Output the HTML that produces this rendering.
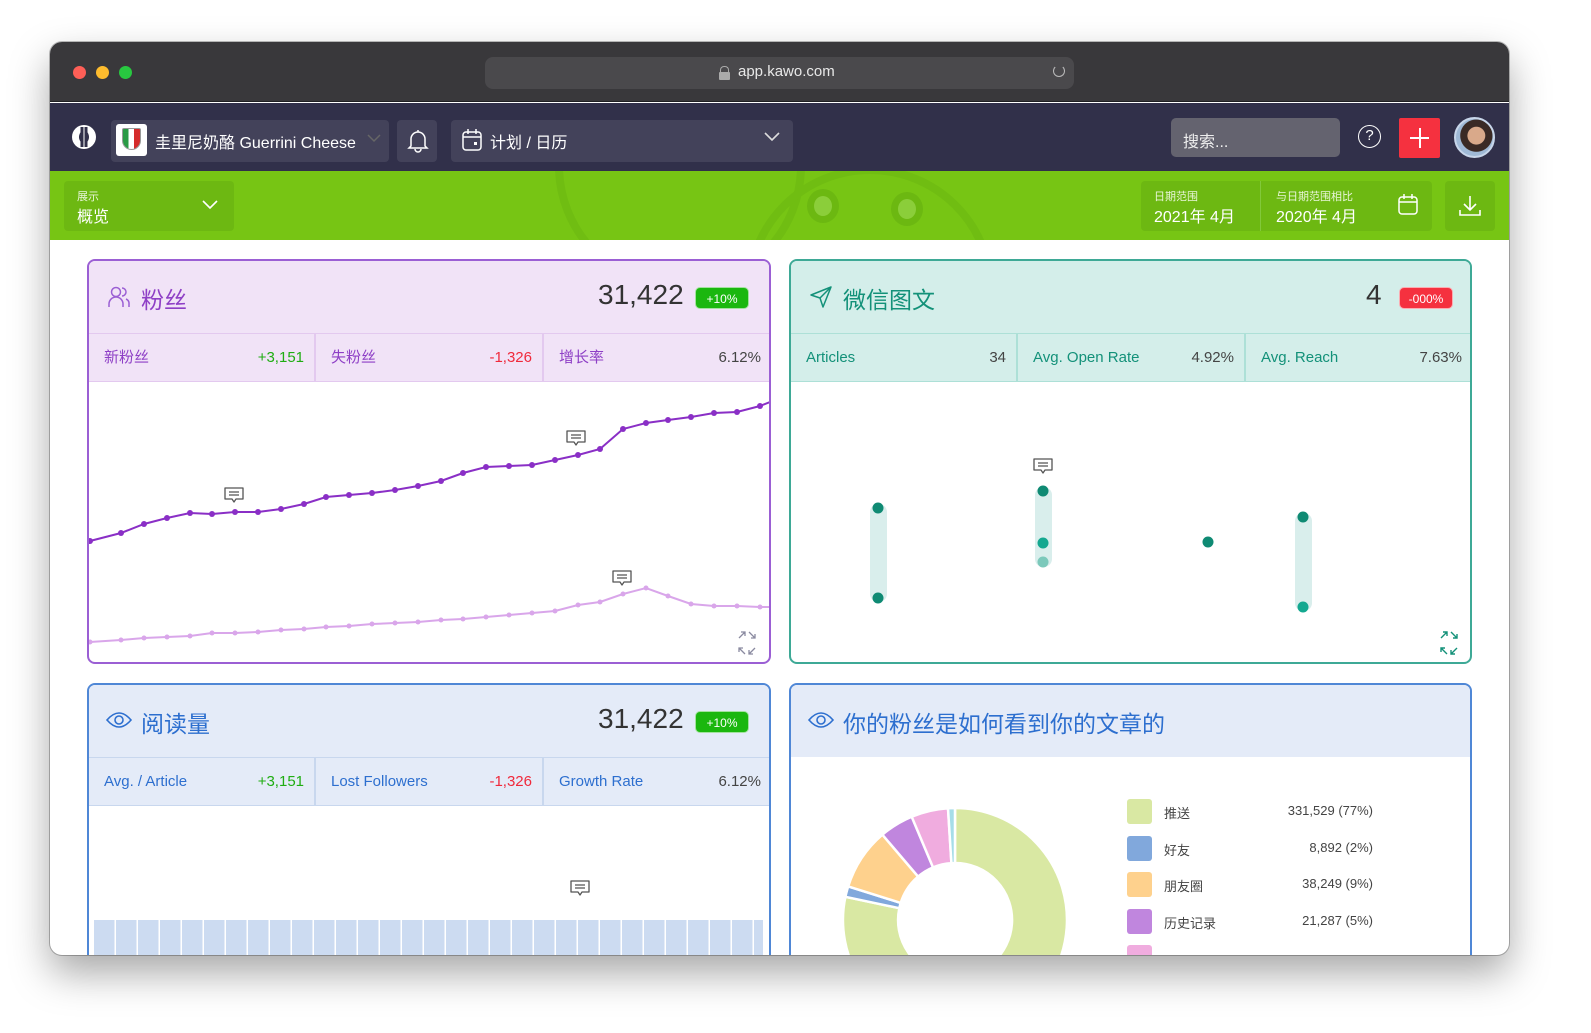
<!DOCTYPE html>
<html><head><meta charset="utf-8"><style>
*{box-sizing:border-box;margin:0;padding:0}
body{width:1591px;height:1033px;background:#fff;position:relative;overflow:hidden;font-family:"Liberation Sans","Noto Sans CJK SC",sans-serif}
.a{position:absolute}
#win{left:50px;top:42px;width:1459px;height:913px;border-radius:12px;overflow:hidden;box-shadow:0 18px 40px rgba(0,0,0,.35),0 0 0 1px rgba(0,0,0,.25);background:#fff}
.card{position:absolute;border:2px solid;border-radius:8px;overflow:hidden;background:#fff}
.hd{position:absolute;left:0;right:0;top:0;height:72px}
.st{position:absolute;left:0;right:0;top:72px;height:49px;border-top:1px solid;border-bottom:1px solid}
.cell{position:absolute;top:0;height:47px;font-size:15px;line-height:47px}
.cell .l{position:absolute;left:15px}
.cell .r{position:absolute;right:10px;color:#444}
.title{position:absolute;left:52px;top:20px;font-size:23px}
.big{position:absolute;top:18px;font-size:28px;color:#333}
.badge{position:absolute;top:26px;height:22px;border-radius:5px;color:#fff;font-size:12px;line-height:22px;text-align:center;border:1px solid rgba(255,255,255,.6)}
.bx{position:absolute;background:rgba(0,0,0,.07);border-radius:4px}
.leg{position:absolute;left:1127px;font-size:13px;color:#444;white-space:nowrap;width:260px;height:26px}
.leg i{position:absolute;left:0;top:0;width:25px;height:25px;border-radius:3px}
.leg b{position:absolute;left:37px;top:4px;font-weight:normal}
.leg span{position:absolute;left:158px;top:4px;width:88px;text-align:right}
</style></head><body>
<div id="win" class="a">
 <div class="a" style="left:0;top:0;width:1459px;height:60px;background:#39383b;border-bottom:1px solid #1f1f22"></div>
 <div class="a" style="left:23px;top:24px;width:13px;height:13px;border-radius:50%;background:#fe5f57"></div>
 <div class="a" style="left:46px;top:24px;width:13px;height:13px;border-radius:50%;background:#febc2e"></div>
 <div class="a" style="left:69px;top:24px;width:13px;height:13px;border-radius:50%;background:#28c840"></div>
 <div class="a" style="left:435px;top:15px;width:589px;height:32px;border-radius:8px;background:#4a494c"></div>
 <div class="a" style="left:670px;top:24px;width:9px;height:7px;border:1.5px solid #aaa;border-bottom:none;border-radius:4px 4px 0 0"></div>
 <div class="a" style="left:669px;top:30px;width:11px;height:8px;background:#aaa;border-radius:1px"></div>
 <div class="a" style="left:688px;top:21px;font-size:15px;color:#e8e8e8">app.kawo.com</div>
 <div class="a" style="left:1003px;top:23px;width:12px;height:12px;border:1.5px solid #bbb;border-radius:50%;border-top-color:transparent"></div>
 <div class="a" style="left:0;top:61px;width:1459px;height:68px;background:#31304a"></div>
 <svg class="a" style="left:21px;top:82px" width="26" height="26" viewBox="0 0 26 26"><circle cx="13" cy="13" r="12" fill="#fff"/><path d="M11 3v20M15 3v20" stroke="#31304a" stroke-width="3"/><path d="M11 8q-4 5 0 10M15 8q4 5 0 10" stroke="#31304a" stroke-width="2" fill="none"/></svg>
 <div class="bx" style="left:61px;top:78px;width:278px;height:42px;background:rgba(255,255,255,.09)"></div>
 <div class="a" style="left:66px;top:82px;width:31px;height:32px;background:#fff;border-radius:3px"></div>
 <div class="a" style="left:72px;top:86px;width:19px;height:22px;border-radius:2px 2px 10px 10px;background:linear-gradient(90deg,#2a9a45 33%,#fff 33%,#fff 66%,#d52b2b 66%);border:1px solid #999"></div>
 <div class="a" style="left:105px;top:87px;font-size:16px;color:#fff">圭里尼奶酪 Guerrini Cheese</div>
 <svg class="a" style="left:317px;top:92px" width="14" height="9"><path d="M1 1l6 6 6-6" stroke="#666" stroke-width="1.5" fill="none"/></svg>
 <div class="bx" style="left:347px;top:78px;width:40px;height:42px;background:rgba(255,255,255,.09)"></div>
 <svg class="a" style="left:357px;top:86px" width="22" height="26" viewBox="0 0 22 26"><path d="M4 18V11a7 7 0 0114 0v7l2 2H2z M8 21a3 3 0 006 0M11 2v2" stroke="#fff" stroke-width="1.5" fill="none"/></svg>
 <div class="bx" style="left:401px;top:78px;width:342px;height:42px;background:rgba(255,255,255,.09)"></div>
 <svg class="a" style="left:411px;top:86px" width="22" height="24"><rect x="2" y="4" width="18" height="18" rx="3" stroke="#fff" stroke-width="1.5" fill="none"/><path d="M2 9h18M7 1v5M15 1v5" stroke="#fff" stroke-width="1.5"/><rect x="13" y="14" width="3" height="3" fill="#fff"/></svg>
 <div class="a" style="left:440px;top:87px;font-size:16px;color:#fff">计划 / 日历</div>
 <svg class="a" style="left:714px;top:90px" width="16" height="10"><path d="M1 1l7 7 7-7" stroke="#ddd" stroke-width="1.6" fill="none"/></svg>
 <div class="a" style="left:1121px;top:76px;width:169px;height:39px;border-radius:5px;background:#64636f"></div>
 <div class="a" style="left:1133px;top:86px;font-size:16px;color:#eee">搜索...</div>
 <div class="a" style="left:1308px;top:83px;width:23px;height:23px;border:1.5px solid #fff;border-radius:50%;color:#fff;font-size:15px;text-align:center;line-height:20px">?</div>
 <div class="a" style="left:1349px;top:76px;width:41px;height:40px;background:#f5313f;border-radius:2px"></div>
 <div class="a" style="left:1360px;top:95px;width:19px;height:2px;background:#fff"></div>
 <div class="a" style="left:1369px;top:86px;width:2px;height:20px;background:#fff"></div>
 <div class="a" style="left:1404px;top:75px;width:41px;height:41px;border-radius:50%;background:radial-gradient(circle at 55% 45%,#d9a98a 0 30%,#3a2a25 32% 55%,#9fb9d6 57%);border:2px solid #c8d6ea"></div>
 <div class="a" style="left:0;top:129px;width:1459px;height:69px;background:#77c514;overflow:hidden">
  <div class="a" style="left:505px;top:-130px;width:250px;height:250px;border-radius:50%;border:8px solid #70bd12"></div>
  <div class="a" style="left:695px;top:-5px;width:250px;height:250px;border-radius:50%;border:8px solid #70bd12"></div>
  <div class="a" style="left:757px;top:18px;width:32px;height:34px;border-radius:50%;border:7px solid #6cb811;background:#8bce3a"></div>
  <div class="a" style="left:841px;top:21px;width:32px;height:34px;border-radius:50%;border:7px solid #6cb811;background:#8bce3a"></div>
 </div>
 <div class="bx" style="left:14px;top:139px;width:170px;height:50px;background:#6db812"></div>
 <div class="a" style="left:27px;top:146px;font-size:11px;color:#e8f5d8">展示</div>
 <div class="a" style="left:27px;top:161px;font-size:16px;color:#fff">概览</div>
 <svg class="a" style="left:152px;top:158px" width="16" height="10"><path d="M1 1l7 7 7-7" stroke="#fff" stroke-width="1.6" fill="none"/></svg>
 <div class="bx" style="left:1091px;top:139px;width:291px;height:50px;background:#6db812"></div>
 <div class="a" style="left:1210px;top:139px;width:1px;height:50px;background:#82c93a"></div>
 <div class="a" style="left:1104px;top:146px;font-size:11px;color:#e8f5d8">日期范围</div>
 <div class="a" style="left:1104px;top:161px;font-size:16px;color:#fff">2021年 4月</div>
 <div class="a" style="left:1226px;top:146px;font-size:11px;color:#e8f5d8">与日期范围相比</div>
 <div class="a" style="left:1226px;top:161px;font-size:16px;color:#fff">2020年 4月</div>
 <svg class="a" style="left:1347px;top:151px" width="22" height="24"><rect x="2" y="4" width="18" height="17" rx="3" stroke="#fff" stroke-width="1.5" fill="none"/><path d="M2 9h18M7 1v5M15 1v5" stroke="#fff" stroke-width="1.5"/></svg>
 <div class="bx" style="left:1395px;top:139px;width:50px;height:50px;background:#6db812"></div>
 <svg class="a" style="left:1408px;top:152px" width="24" height="24"><path d="M12 2v14M6 10l6 6 6-6M2 16v5h20v-5" stroke="#fff" stroke-width="1.6" fill="none"/></svg>
</div>

<div class="card" style="left:87px;top:259px;width:684px;height:405px;border-color:#9b5fd4">
 <div class="hd" style="background:#f1e3f7"></div>
 <svg class="a" style="left:18px;top:24px" width="24" height="24"><circle cx="9" cy="7" r="4.5" stroke="#9b5fd4" stroke-width="1.5" fill="none"/><path d="M2 22v-3a7 7 0 0114 0v3M15 3a4 4 0 010 8M19 14a5 5 0 013 5v3" stroke="#9b5fd4" stroke-width="1.5" fill="none"/></svg>
 <div class="title" style="color:#8e3fc6">粉丝</div>
 <div class="big" style="left:509px">31,422</div>
 <div class="badge" style="left:606px;width:54px;background:#1bb70f">+10%</div>
 <div class="st" style="background:#f1e3f7;border-color:#e3c9ef">
  <div class="cell" style="left:0;width:227px;border-right:2px solid #e3c9ef"><span class="l" style="color:#8e3fc6">新粉丝</span><span class="r" style="color:#1fad12">+3,151</span></div>
  <div class="cell" style="left:227px;width:228px;border-right:2px solid #e3c9ef"><span class="l" style="color:#8e3fc6">失粉丝</span><span class="r" style="color:#f0293b">-1,326</span></div>
  <div class="cell" style="left:455px;width:227px"><span class="l" style="color:#8e3fc6">增长率</span><span class="r">6.12%</span></div>
 </div>
</div>
<div class="card" style="left:789px;top:259px;width:683px;height:405px;border-color:#3ea996">
 <div class="hd" style="background:#d4eeea"></div>
 <svg class="a" style="left:18px;top:24px" width="24" height="24"><path d="M22 2L2 10l9 3 3 9z M22 2L11 13" stroke="#139179" stroke-width="1.5" fill="none" stroke-linejoin="round"/></svg>
 <div class="title" style="color:#139179">微信图文</div>
 <div class="big" style="left:575px">4</div>
 <div class="badge" style="left:608px;width:54px;background:#f5313f">-000%</div>
 <div class="st" style="background:#d4eeea;border-color:#ade0d7">
  <div class="cell" style="left:0;width:227px;border-right:2px solid #ade0d7"><span class="l" style="color:#139179">Articles</span><span class="r">34</span></div>
  <div class="cell" style="left:227px;width:228px;border-right:2px solid #ade0d7"><span class="l" style="color:#139179">Avg. Open Rate</span><span class="r">4.92%</span></div>
  <div class="cell" style="left:455px;width:226px"><span class="l" style="color:#139179">Avg. Reach</span><span class="r">7.63%</span></div>
 </div>
</div>
<div class="card" style="left:87px;top:683px;width:684px;height:272px;border-color:#4f87d6;border-bottom:none;border-radius:8px 8px 0 0">
 <div class="hd" style="background:#e4ebf8"></div>
 <svg class="a" style="left:17px;top:24px" width="26" height="22"><path d="M1 11Q13-3 25 11Q13 25 1 11z" stroke="#2d6fcf" stroke-width="1.6" fill="none"/><circle cx="13" cy="11" r="4" stroke="#2d6fcf" stroke-width="1.6" fill="none"/></svg>
 <div class="title" style="color:#2d6fcf">阅读量</div>
 <div class="big" style="left:509px">31,422</div>
 <div class="badge" style="left:606px;width:54px;background:#1bb70f">+10%</div>
 <div class="st" style="background:#e4ebf8;border-color:#c8d7ee">
  <div class="cell" style="left:0;width:227px;border-right:2px solid #c8d7ee"><span class="l" style="color:#2d6fcf">Avg. / Article</span><span class="r" style="color:#1fad12">+3,151</span></div>
  <div class="cell" style="left:227px;width:228px;border-right:2px solid #c8d7ee"><span class="l" style="color:#2d6fcf">Lost Followers</span><span class="r" style="color:#f0293b">-1,326</span></div>
  <div class="cell" style="left:455px;width:227px"><span class="l" style="color:#2d6fcf">Growth Rate</span><span class="r">6.12%</span></div>
 </div>
</div>
<div class="card" style="left:789px;top:683px;width:683px;height:272px;border-color:#4f87d6;border-bottom:none;border-radius:8px 8px 0 0">
 <div class="hd" style="background:#e4ebf8"></div>
 <svg class="a" style="left:17px;top:24px" width="26" height="22"><path d="M1 11Q13-3 25 11Q13 25 1 11z" stroke="#2d6fcf" stroke-width="1.6" fill="none"/><circle cx="13" cy="11" r="4" stroke="#2d6fcf" stroke-width="1.6" fill="none"/></svg>
 <div class="title" style="color:#2d6fcf">你的粉丝是如何看到你的文章的</div>
</div>

<svg class="a" style="left:0;top:0" width="1591" height="1033">
 <defs><g id="cm"><path d="M-9-7h18v11h-7l-2 3-2-3h-7z" fill="#fff" stroke="#555" stroke-width="1.3" stroke-linejoin="round"/><path d="M-5-3h10M-5 0h10" stroke="#555" stroke-width="1.2"/></g>
 <clipPath id="c1"><rect x="89" y="381" width="680" height="280"/></clipPath>
 <clipPath id="cw"><rect x="50" y="42" width="1459" height="913"/></clipPath></defs>
 <g clip-path="url(#c1)">
 <polyline fill="none" stroke="#8a2fc6" stroke-width="2" points="88,542 90,541 121,533 144,524 167,518 190,513 212,514 235,512 258,512 281,509 304,504 326,497 349,495 372,493 395,490 418,486 441,481 463,473 486,467 509,466 532,465 555,460 578,455 600,449 623,429 646,423 668,420 691,417 714,413 737,412 760,406 770,402"/>
 <g fill="#8a2fc6"><circle cx="90" cy="541" r="3"/><circle cx="121" cy="533" r="3"/><circle cx="144" cy="524" r="3"/><circle cx="167" cy="518" r="3"/><circle cx="190" cy="513" r="3"/><circle cx="212" cy="514" r="3"/><circle cx="235" cy="512" r="3"/><circle cx="258" cy="512" r="3"/><circle cx="281" cy="509" r="3"/><circle cx="304" cy="504" r="3"/><circle cx="326" cy="497" r="3"/><circle cx="349" cy="495" r="3"/><circle cx="372" cy="493" r="3"/><circle cx="395" cy="490" r="3"/><circle cx="418" cy="486" r="3"/><circle cx="441" cy="481" r="3"/><circle cx="463" cy="473" r="3"/><circle cx="486" cy="467" r="3"/><circle cx="509" cy="466" r="3"/><circle cx="532" cy="465" r="3"/><circle cx="555" cy="460" r="3"/><circle cx="578" cy="455" r="3"/><circle cx="600" cy="449" r="3"/><circle cx="623" cy="429" r="3"/><circle cx="646" cy="423" r="3"/><circle cx="668" cy="420" r="3"/><circle cx="691" cy="417" r="3"/><circle cx="714" cy="413" r="3"/><circle cx="737" cy="412" r="3"/><circle cx="760" cy="406" r="3"/></g>
 <polyline fill="none" stroke="#d9a6ea" stroke-width="2" points="88,642 90,642 121,640 144,638 167,637 190,636 212,633 235,633 258,632 281,630 304,629 326,627 349,626 372,624 395,623 418,622 441,620 463,619 486,617 509,615 532,613 555,611 578,605 600,602 623,594 646,588 668,596 691,604 714,606 737,606 760,607 770,607"/>
 <g fill="#d9a6ea"><circle cx="90" cy="642" r="2.5"/><circle cx="121" cy="640" r="2.5"/><circle cx="144" cy="638" r="2.5"/><circle cx="167" cy="637" r="2.5"/><circle cx="190" cy="636" r="2.5"/><circle cx="212" cy="633" r="2.5"/><circle cx="235" cy="633" r="2.5"/><circle cx="258" cy="632" r="2.5"/><circle cx="281" cy="630" r="2.5"/><circle cx="304" cy="629" r="2.5"/><circle cx="326" cy="627" r="2.5"/><circle cx="349" cy="626" r="2.5"/><circle cx="372" cy="624" r="2.5"/><circle cx="395" cy="623" r="2.5"/><circle cx="418" cy="622" r="2.5"/><circle cx="441" cy="620" r="2.5"/><circle cx="463" cy="619" r="2.5"/><circle cx="486" cy="617" r="2.5"/><circle cx="509" cy="615" r="2.5"/><circle cx="532" cy="613" r="2.5"/><circle cx="555" cy="611" r="2.5"/><circle cx="578" cy="605" r="2.5"/><circle cx="600" cy="602" r="2.5"/><circle cx="623" cy="594" r="2.5"/><circle cx="646" cy="588" r="2.5"/><circle cx="668" cy="596" r="2.5"/><circle cx="691" cy="604" r="2.5"/><circle cx="714" cy="606" r="2.5"/><circle cx="737" cy="606" r="2.5"/><circle cx="760" cy="607" r="2.5"/></g>
 </g>
 <use href="#cm" x="234" y="495"/><use href="#cm" x="576" y="438"/><use href="#cm" x="622" y="578"/>
 <g stroke="#8a8aa0" stroke-width="1.3" fill="none"><path d="M739 638l6-6m-4 0h4v4M755 648l-6 6m4 0h-4v-4M745 654l-6-6m0 4v-4h4M749 632l6 6m0-4v4h-4"/></g>
 <g fill="#d9eeec"><rect x="870" y="504" width="17" height="98" rx="8"/><rect x="1035" y="487" width="17" height="80" rx="8"/><rect x="1295" y="513" width="17" height="98" rx="8"/></g>
 <g fill="#0f8a73"><circle cx="878" cy="508" r="5.5"/><circle cx="878" cy="598" r="5.5"/><circle cx="1043" cy="491" r="5.5"/><circle cx="1208" cy="542" r="5.5"/><circle cx="1303" cy="517" r="5.5"/></g>
 <g fill="#14a890"><circle cx="1043" cy="543" r="5.5"/><circle cx="1303" cy="607" r="5.5"/></g>
 <circle cx="1043" cy="562" r="5.5" fill="#7cc9bb"/>
 <use href="#cm" x="1043" y="466"/>
 <g stroke="#139179" stroke-width="1.4" fill="none"><path d="M1441 638l6-6m-4 0h4v4M1457 648l-6 6m4 0h-4v-4M1447 654l-6-6m0 4v-4h4M1451 632l6 6m0-4v4h-4"/></g>
 <g clip-path="url(#cw)">
 <use href="#cm" x="580" y="888"/>
 <g transform="translate(955,920)" stroke="#fff" stroke-width="2.5">
  <path d="M0-112A112 112 0 1 1 -109.6 -23.2L-55.7-11.8A57 57 0 1 0 0-57z" fill="#d9e8a3"/>
  <path d="M-109.6-23.2A112 112 0 0 1 -106.8 -33.6L-54.3-17.1A57 57 0 0 0 -55.7-11.8z" fill="#81a8dc"/>
  <path d="M-106.8-33.6A112 112 0 0 1 -72.6 -85.3L-36.9-43.4A57 57 0 0 0 -54.3-17.1z" fill="#fed18d"/>
  <path d="M-72.6-85.3A112 112 0 0 1 -43.3 -103.3L-22-52.6A57 57 0 0 0 -36.9-43.4z" fill="#c086de"/>
  <path d="M-43.3-103.3A112 112 0 0 1 -7 -111.8L-3.6-56.9A57 57 0 0 0 -22-52.6z" fill="#f0acdf"/>
  <path d="M-7-111.8A112 112 0 0 1 0 -112L0-57A57 57 0 0 0 -3.6-56.9z" fill="#a6dde8"/>
 </g>
 <g fill="#ccdbf1">
  <rect x="94" y="920" width="20.5" height="35"/><rect x="116" y="920" width="20.5" height="35"/><rect x="138" y="920" width="20.5" height="35"/><rect x="160" y="920" width="20.5" height="35"/><rect x="182" y="920" width="20.5" height="35"/><rect x="204" y="920" width="20.5" height="35"/><rect x="226" y="920" width="20.5" height="35"/><rect x="248" y="920" width="20.5" height="35"/><rect x="270" y="920" width="20.5" height="35"/><rect x="292" y="920" width="20.5" height="35"/><rect x="314" y="920" width="20.5" height="35"/><rect x="336" y="920" width="20.5" height="35"/><rect x="358" y="920" width="20.5" height="35"/><rect x="380" y="920" width="20.5" height="35"/><rect x="402" y="920" width="20.5" height="35"/><rect x="424" y="920" width="20.5" height="35"/><rect x="446" y="920" width="20.5" height="35"/><rect x="468" y="920" width="20.5" height="35"/><rect x="490" y="920" width="20.5" height="35"/><rect x="512" y="920" width="20.5" height="35"/><rect x="534" y="920" width="20.5" height="35"/><rect x="556" y="920" width="20.5" height="35"/><rect x="578" y="920" width="20.5" height="35"/><rect x="600" y="920" width="20.5" height="35"/><rect x="622" y="920" width="20.5" height="35"/><rect x="644" y="920" width="20.5" height="35"/><rect x="666" y="920" width="20.5" height="35"/><rect x="688" y="920" width="20.5" height="35"/><rect x="710" y="920" width="20.5" height="35"/><rect x="732" y="920" width="20.5" height="35"/><rect x="754" y="920" width="9" height="35"/>
 </g>
 </g>
</svg>
<div class="leg" style="top:799px"><i style="background:#d9e8a3"></i><b>推送</b><span>331,529 (77%)</span></div>
<div class="leg" style="top:836px"><i style="background:#81a8dc"></i><b>好友</b><span>8,892 (2%)</span></div>
<div class="leg" style="top:872px"><i style="background:#fed18d"></i><b>朋友圈</b><span>38,249 (9%)</span></div>
<div class="leg" style="top:909px"><i style="background:#c086de"></i><b>历史记录</b><span>21,287 (5%)</span></div>
<div class="leg" style="top:945px;height:10px;overflow:hidden"><i style="background:#f0acdf"></i></div>
</body></html>
